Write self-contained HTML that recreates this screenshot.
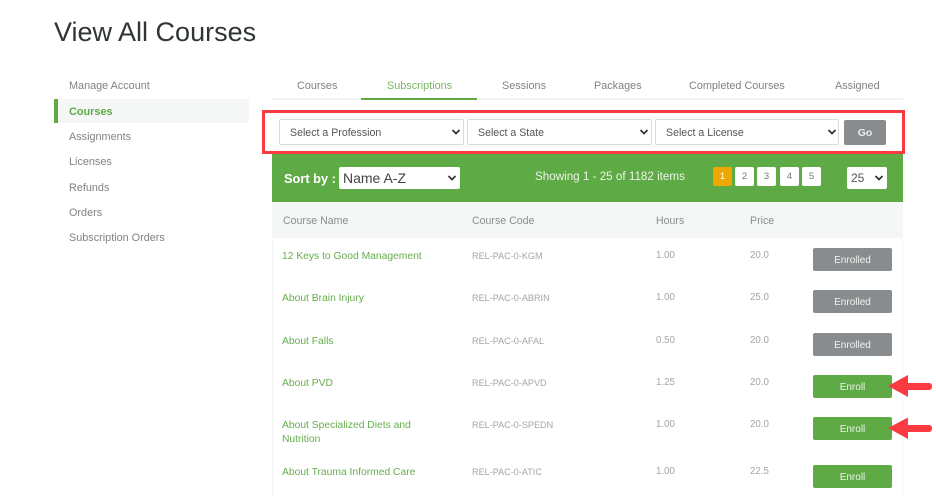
<!DOCTYPE html>
<html><head><meta charset="utf-8"><style>
html,body{margin:0;padding:0;background:#fff}
body{width:936px;height:496px;position:relative;overflow:hidden;font-family:"Liberation Sans",sans-serif}
div{position:absolute;white-space:nowrap;box-sizing:border-box}
.t{font-size:10.85px;line-height:14px;color:#7f8283}
.n{font-size:10.85px;line-height:14px;color:#7f8283}
.g{font-size:10.3px;line-height:14px;color:#66ad4d;margin-top:1px}
.c{font-size:9.1px;line-height:14px;color:#a3a5a6;margin-top:1px}
.d{font-size:9.7px;line-height:14px;color:#a3a5a6;margin-top:.5px}
.h{font-size:10.6px;line-height:14px;color:#8a8d8e}
.sel{background:#fff;border:1px solid #d8dadb;border-radius:2px;height:26px;top:119px;font-size:10.6px;line-height:26px;color:#555;padding-left:10px}
.chev{position:absolute;width:10px;height:6px}
.btn{left:813px;width:79px;height:23px;border-radius:2px;color:#f1f3f0;font-size:10px;line-height:25px;text-align:center}
.en{background:#5eaa44}.ed{background:#898c8e}
.pg{top:167px;width:19px;height:19px;background:#fff;border-radius:2px;font-size:9.5px;line-height:19px;text-align:center;color:#777}
</style></head><body>
<div style="left:54px;top:15px;font-size:27px;line-height:34px;color:#2f3436">View All Courses</div>

<div class="n" style="left:69px;top:79px">Manage Account</div>
<div style="left:54px;top:99px;width:195px;height:24px;background:#f5f7f6"></div>
<div style="left:54px;top:99px;width:4px;height:24px;background:#5eaa44"></div>
<div style="left:69px;top:105px;font-size:10.9px;line-height:14px;font-weight:bold;color:#5eaa44">Courses</div>
<div class="n" style="left:69px;top:130px">Assignments</div>
<div class="n" style="left:69px;top:155px">Licenses</div>
<div class="n" style="left:69px;top:181px">Refunds</div>
<div class="n" style="left:69px;top:206px">Orders</div>
<div class="n" style="left:69px;top:231px">Subscription Orders</div>

<div class="t" style="left:297px;top:79px">Courses</div>
<div class="t" style="left:387px;top:79px;color:#7ab765">Subscriptions</div>
<div class="t" style="left:502px;top:79px">Sessions</div>
<div class="t" style="left:594px;top:79px">Packages</div>
<div class="t" style="left:689px;top:79px">Completed Courses</div>
<div class="t" style="left:835px;top:79px">Assigned</div>
<div style="left:272px;top:98px;width:631px;height:2px;background:#f3f5f4"></div>
<div style="left:361px;top:98px;width:116px;height:2px;background:#5eaa44"></div>

<div style="left:262px;top:110px;width:643px;height:44px;border:3px solid #fb3b42"></div>
<div class="sel" style="left:279px;width:185px">Select a Profession<svg class="chev" style="left:171px;top:9px" viewBox="0 0 10 6"><path d="M1.500 1 5 4.500 8.500 1" fill="none" stroke="#333" stroke-width="1.7"/></svg></div>
<div class="sel" style="left:467px;width:185px">Select a State<svg class="chev" style="left:171px;top:9px" viewBox="0 0 10 6"><path d="M1.500 1 5 4.500 8.500 1" fill="none" stroke="#333" stroke-width="1.7"/></svg></div>
<div class="sel" style="left:655px;width:184px">Select a License<svg class="chev" style="left:171px;top:9px" viewBox="0 0 10 6"><path d="M1.500 1 5 4.500 8.500 1" fill="none" stroke="#333" stroke-width="1.7"/></svg></div>
<div style="left:844px;top:120px;width:42px;height:25px;background:#898c8e;border-radius:2px;color:#e9ebea;font-size:10.500px;font-weight:bold;line-height:27px;text-align:center">Go</div>

<div style="left:272px;top:154px;width:631px;height:48px;background:#5eaa44"></div>
<div style="left:284px;top:170px;font-size:12.800px;line-height:17px;font-weight:bold;color:#fff">Sort by :</div>
<div style="left:339px;top:167px;width:121px;height:22px;background:#fff;border-radius:2px;font-size:14px;line-height:23px;color:#444;padding-left:4px">Name A-Z<svg class="chev" style="left:108px;top:8px" viewBox="0 0 10 6"><path d="M1.500 1 5 4.500 8.500 1" fill="none" stroke="#333" stroke-width="1.7"/></svg></div>
<div style="left:535px;top:170px;font-size:11.650px;line-height:14px;color:#eef4ea">Showing 1 - 25 of 1182 items</div>
<div class="pg" style="left:713px;background:#eea800;color:#fff">1</div>
<div class="pg" style="left:735px">2</div>
<div class="pg" style="left:757px">3</div>
<div class="pg" style="left:780px">4</div>
<div class="pg" style="left:802px">5</div>
<div style="left:847px;top:167px;width:40px;height:22px;background:#fff;border-radius:2px;font-size:12px;line-height:23px;color:#555;padding-left:4px">25<svg class="chev" style="left:27px;top:8px" viewBox="0 0 10 6"><path d="M1.500 1 5 4.500 8.500 1" fill="none" stroke="#333" stroke-width="1.7"/></svg></div>

<div style="left:272px;top:202px;width:631px;height:36px;background:#f5f7f6"></div>
<div style="left:272px;top:238px;width:1px;height:258px;background:#f3f5f4"></div>
<div style="left:902px;top:238px;width:1px;height:258px;background:#f3f5f4"></div>
<div class="h" style="left:283px;top:214px">Course Name</div>
<div class="h" style="left:472px;top:214px">Course Code</div>
<div class="h" style="left:656px;top:214px">Hours</div>
<div class="h" style="left:750px;top:214px">Price</div>

<div class="g" style="left:282px;top:249px">12 Keys to Good Management</div>
<div class="c" style="left:472px;top:248px">REL-PAC-0-KGM</div>
<div class="d" style="left:656px;top:248px">1.00</div>
<div class="d" style="left:750px;top:248px">20.0</div>
<div class="btn ed" style="top:248px">Enrolled</div>

<div class="g" style="left:282px;top:291px">About Brain Injury</div>
<div class="c" style="left:472px;top:290px">REL-PAC-0-ABRIN</div>
<div class="d" style="left:656px;top:290px">1.00</div>
<div class="d" style="left:750px;top:290px">25.0</div>
<div class="btn ed" style="top:290px">Enrolled</div>

<div class="g" style="left:282px;top:334px">About Falls</div>
<div class="c" style="left:472px;top:333px">REL-PAC-0-AFAL</div>
<div class="d" style="left:656px;top:333px">0.50</div>
<div class="d" style="left:750px;top:333px">20.0</div>
<div class="btn ed" style="top:333px">Enrolled</div>

<div class="g" style="left:282px;top:376px">About PVD</div>
<div class="c" style="left:472px;top:375px">REL-PAC-0-APVD</div>
<div class="d" style="left:656px;top:375px">1.25</div>
<div class="d" style="left:750px;top:375px">20.0</div>
<div class="btn en" style="top:375px">Enroll</div>

<div class="g" style="left:282px;top:418px">About Specialized Diets and</div>
<div class="g" style="left:282px;top:432px">Nutrition</div>
<div class="c" style="left:472px;top:417px">REL-PAC-0-SPEDN</div>
<div class="d" style="left:656px;top:417px">1.00</div>
<div class="d" style="left:750px;top:417px">20.0</div>
<div class="btn en" style="top:417px">Enroll</div>

<div class="g" style="left:282px;top:465px">About Trauma Informed Care</div>
<div class="c" style="left:472px;top:464px">REL-PAC-0-ATIC</div>
<div class="d" style="left:656px;top:464px">1.00</div>
<div class="d" style="left:750px;top:464px">22.5</div>
<div class="btn en" style="top:465px">Enroll</div>

<svg style="position:absolute;left:0;top:0" width="936" height="496" viewBox="0 0 936 496">
<path d="M888 386 908 375V383H929Q932 383 932 386.500Q932 390 929 390H908V397Z" fill="#fb3b42"/>
<path d="M888 428 908 417.500V425H929Q932 425 932 428.500Q932 432 929 432H908V439Z" fill="#fb3b42"/>
</svg>
</body></html>
